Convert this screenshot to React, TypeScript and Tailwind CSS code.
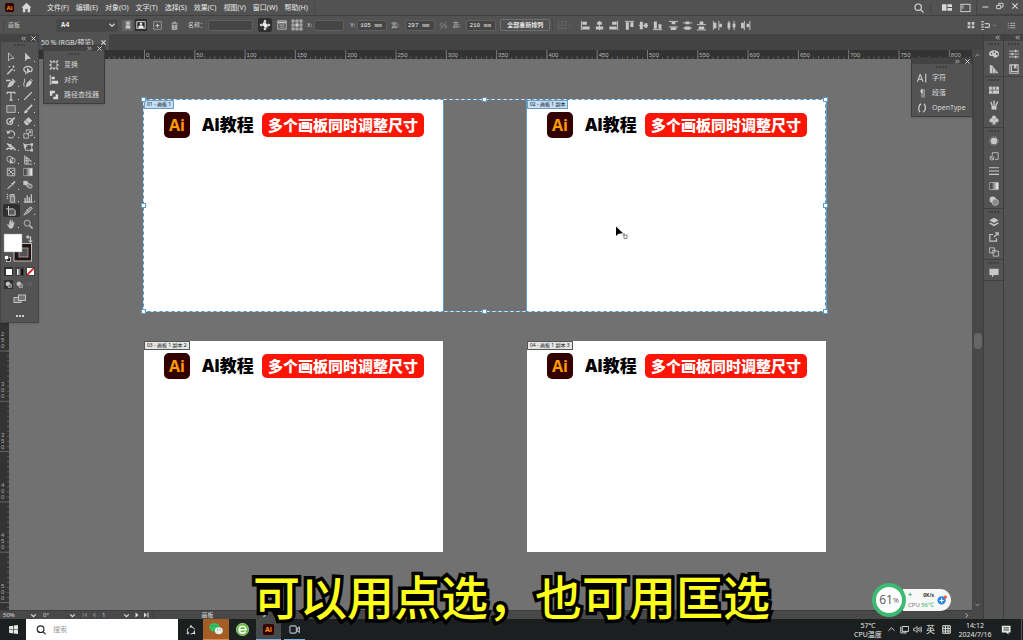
import React from "react";
import type { ReactNode } from "react";

const DIM = "text-[#c8c8c8]";

function Ico({ children, className = "size-3", w = 1 }: { children: ReactNode; className?: string; w?: number }) {
  return (
    <svg viewBox="0 0 12 12" fill="none" stroke="currentColor" strokeWidth={w} className={"shrink-0 " + className} aria-hidden="true">
      {children}
    </svg>
  );
}

const F = { fill: "currentColor", stroke: "none" } as const;

function Btn({ label, children, className = "" }: { label: string; children: ReactNode; className?: string }) {
  return (
    <button type="button" aria-label={label} className={"flex shrink-0 items-center justify-center " + className}>
      {children}
    </button>
  );
}

function Caret({ className = "size-2" }: { className?: string }) {
  return (
    <Ico className={className} w={2}>
      <path d="M2 4l4 4 4-4" />
    </Ico>
  );
}

function AiLogo({ className }: { className: string }) {
  return (
    <span className={"flex shrink-0 items-center justify-center bg-[#330000] font-['Open_Sans',sans-serif] font-bold leading-none text-[#ff9a00] " + className}>
      Ai
    </span>
  );
}

/* ---------- menu bar ---------- */

const MENUS = ["文件(F)", "编辑(E)", "对象(O)", "文字(T)", "选择(S)", "效果(C)", "视图(V)", "窗口(W)", "帮助(H)"];

function MenuBar() {
  return (
    <header className="flex h-4 shrink-0 items-center border-b border-[#404040] bg-[#525252]">
      <AiLogo className="ml-[5px] size-[9px] rounded-[2px] text-[6px]" />
      <Btn label="主页" className="ml-[6px] w-3 text-[#d6d6d6]">
        <Ico className="size-[11px]">
          <path {...F} d="M6 .8L.6 6H2v5.200h2.800V7.600h2.400v3.600H10V6h1.400z" />
        </Ico>
      </Btn>
      <nav className="ml-[15px] flex gap-[7px]">
        {MENUS.map((m) => (
          <button key={m} type="button" className="text-[7px] leading-[14px] whitespace-nowrap text-[#e8e8e8]">
            {m}
          </button>
        ))}
      </nav>
      <span className="ml-[6px] h-3 w-px bg-[#484848]" />
      <div className="ml-auto flex h-full items-center text-[#d8d8d8]">
        <Btn label="搜索" className="w-3">
          <Ico className="size-[10px]" w={1.4}>
            <circle cx="5" cy="5" r="3.8" />
            <path d="M8 8l3.400 3.400" />
          </Ico>
        </Btn>
        <span className="mr-[7px] ml-[5px] h-2.5 w-px bg-[#444]" />
        <Btn label="排列文档" className="ml-[2px] w-3">
          <Ico className="size-[11px]">
            <path {...F} d="M1 2.500h5v7H1zM7 2.500h5v3H7zM7 6.500h5v3H7z" />
          </Ico>
        </Btn>
        <Btn label="工作区" className="ml-[7px] w-3">
          <Ico className="size-[11px]">
            <rect x="1" y="2.500" width="10" height="8" />
            <path d="M2 4.500h2M2 6.500h2" />
          </Ico>
        </Btn>
        <div className="ml-[5px] flex h-full items-start border-b border-l border-[#444] pt-[2px]">
          <Btn label="最小化" className="w-[15px]">
            <Ico className="size-2">
              <path d="M2 7.500h9" strokeWidth={1.6} />
            </Ico>
          </Btn>
          <Btn label="还原" className="w-[15px]">
            <Ico className="size-2">
              <path d="M1 5h6v5H1zM4 5V2h6.500v5.500H7" strokeWidth={1.4} />
            </Ico>
          </Btn>
          <Btn label="关闭" className="w-4">
            <Ico className="size-2">
              <path d="M2 2l8 8M10 2l-8 8" strokeWidth={1.6} />
            </Ico>
          </Btn>
        </div>
      </div>
    </header>
  );
}

/* ---------- control bar ---------- */

function Field({ id, label, value, className }: { id: string; label: string; value: string; className: string }) {
  return (
    <div className="flex shrink-0 items-center">
      <label htmlFor={id} className="mr-[2px] text-[6px] leading-3 whitespace-nowrap text-[#cfcfcf]">
        {label}
      </label>
      <input
        id={id}
        defaultValue={value}
        className={"h-[11px] rounded-[2px] border border-[#606060] bg-[#454545] px-[2px] font-['Liberation_Mono',monospace] text-[6px] leading-none text-[#ececec] " + className}
      />
    </div>
  );
}

const ALIGN: { label: string; icon: ReactNode }[] = [
  { label: "左对齐", icon: <><path d="M1.500 1v10" /><path {...F} d="M2.500 2h5v3.300h-5zM2.500 7h8v3.300h-8z" /></> },
  { label: "水平居中", icon: <><path d="M6 1v10" /><path {...F} d="M3.500 2h5v3.300h-5zM2 7h8v3.300H2z" /></> },
  { label: "右对齐", icon: <><path d="M10.500 1v10" /><path {...F} d="M4.500 2h5v3.300h-5zM1.500 7h8v3.300h-8z" /></> },
  { label: "顶对齐", icon: <><path d="M1 1.500h10" /><path {...F} d="M2 2.500h3.300v8H2zM7 2.500h3.300v5H7z" /></> },
  { label: "垂直居中", icon: <><path d="M1 6h10" /><path {...F} d="M2 2h3.300v8H2zM7 3.500h3.300v5H7z" /></> },
  { label: "底对齐", icon: <><path d="M1 10.500h10" /><path {...F} d="M2 1.500h3.300v8H2zM7 4.500h3.300v5H7z" /></> },
  { label: "顶分布", icon: <><path d="M1 1.500h10M1 7.500h10" /><path {...F} d="M4 2h4v2.600H4zM3 8h6v3H3z" /></> },
  { label: "垂直分布", icon: <><path d="M1 3.200h10M1 8.800h10" /><path {...F} d="M4 1.500h4v3.200H4zM3 7.200h6v3.300H3z" /></> },
  { label: "底分布", icon: <><path d="M1 5h10M1 10.800h10" /><path {...F} d="M4 1.500h4v3H4zM3 7.200h6v3H3z" /></> },
  { label: "左分布", icon: <><path d="M1.500 1v10M7.500 1v10" /><path {...F} d="M2 3h2.800v6H2zM8 4h2.800v4H8z" /></> },
  { label: "水平分布", icon: <><path d="M3.200 1v10M8.800 1v10" /><path {...F} d="M1.700 3h3v6h-3zM7.300 4h3v4h-3z" /></> },
  { label: "右分布", icon: <><path d="M4.800 1v10M10.800 1v10" /><path {...F} d="M1.200 3h3v6h-3zM7.200 4h3v4h-3z" /></> },
];

function AlignGroup({ from, to }: { from: number; to: number }) {
  return (
    <div className="flex gap-[3px]">
      {ALIGN.slice(from, to).map((a) => (
        <Btn key={a.label} label={a.label} className="w-[11px]">
          <Ico className="size-[11px]">{a.icon}</Ico>
        </Btn>
      ))}
    </div>
  );
}

function ControlBar() {
  return (
    <div className={"flex h-[18px] shrink-0 items-center bg-[#525252] " + DIM}>
      <span className="ml-[3px] h-3 w-px bg-[#474747]" />
      <span className="ml-1 w-12 text-[6px] leading-3">画板</span>
      <label className="flex h-[13px] w-[62px] items-center rounded-[2px] border border-[#4a4a4a] bg-[#474747] pr-px">
        <select aria-label="预设" className="min-w-0 flex-1 appearance-none bg-transparent pl-[4px] font-['Liberation_Mono',monospace] text-[7px] leading-none font-bold text-[#eee]">
          <option>A4</option>
        </select>
        <Caret />
      </label>
      <div className="ml-[4px] flex items-center gap-[2px]">
        <Btn label="纵向" className="h-[11px] w-[11px] bg-[#626262]">
          <Ico className="size-[10px]">
            <path {...F} d="M3 1h6v10H3z" opacity=".45" />
            <circle {...F} cx="6" cy="4" r="1.600" />
            <path {...F} d="M3.500 10V7.500Q6 5 8.500 7.500V10z" />
          </Ico>
        </Btn>
        <Btn label="横向" className="h-3 w-3 bg-[#2e2e2e] text-[#eee]">
          <Ico className="size-[10px]">
            <rect x="1" y="2" width="10" height="8" />
            <path {...F} d="M3 9.500V7.500Q6 5 9 7.500v2z" />
            <circle {...F} cx="6" cy="4.500" r="1.500" />
          </Ico>
        </Btn>
      </div>
      <Btn label="新建画板" className="ml-[5px] w-[11px]">
        <Ico className="size-[9px]">
          <rect x="1" y="1" width="10" height="10" opacity=".7" />
          <path d="M6 3.500v5M3.500 6h5" strokeWidth={1.4} />
        </Ico>
      </Btn>
      <Btn label="删除画板" className="ml-[6px] w-[11px]">
        <Ico className="size-[9px]">
          <path d="M2 3h8M4.500 3V1.500h3V3" />
          <path d="M3 4.500v6.500h6V4.500M5 5v5M7 5v5" strokeWidth={1.3} />
        </Ico>
      </Btn>
      <div className="ml-[8px]"><Field id="ab-name" label="名称：" value="" className="w-[45px]" /></div>
      <Btn label="移动图稿" className="ml-[5px] h-[14px] w-[14px] rounded-[2px] bg-[#2e2e2e] text-[#eee]">
        <Ico className="size-3">
          <path d="M6 1.500v9M1.500 6h9" />
          <path {...F} d="M6 .5l1.700 2.200H4.300zM6 11.500l1.700-2.200H4.300zM.5 6l2.200-1.700v3.400zM11.500 6L9.300 4.300v3.400zM4 3.500h2.500L8.500 6v2.500H6L3.500 6z" />
        </Ico>
      </Btn>
      <Btn label="画板选项" className="ml-[4px] w-[11px]">
        <Ico className="size-[10px]">
          <rect x="1" y="1" width="10" height="10" />
          <path d="M1 3h10" strokeWidth={2} />
          <path d="M3 6h6M3 8.500h6" />
        </Ico>
      </Btn>
      <Btn label="参考点" className="ml-[3px] w-[13px]">
        <Ico className="size-3">
          <path d="M2 2h8v8H2z" opacity=".5" strokeWidth={0.6} />
          {[2, 6, 10].flatMap((x) => [2, 6, 10].map((y) => <rect key={x + "-" + y} x={x - 1} y={y - 1} width="2" height="2" strokeWidth={0.8} />))}
          <path {...F} d="M4.500 4.500h3v3h-3z" />
        </Ico>
      </Btn>
      <div className="ml-[4px] flex items-center">
        <Field id="pos-x" label="X:" value="" className="w-[30px]" />
      </div>
      <div className="ml-[6px]"><Field id="pos-y" label="Y:" value="105 mm" className="w-[30px]" /></div>
      <div className="ml-[4px]"><Field id="size-w" label="宽:" value="297 mm" className="ml-[4px] w-[30px]" /></div>
      <Btn label="约束比例" className="ml-[4px] w-[10px] text-[#777]">
        <Ico className="size-[9px]" w={1.4}>
          <path d="M5 4L3.500 2.500 1.500 4.500 4.500 7.500M7 8l1.500 1.500 2-2-3-3M2 11L10 1" />
        </Ico>
      </Btn>
      <div className="ml-[4px]"><Field id="size-h" label="高:" value="210 mm" className="ml-[4px] w-[30px]" /></div>
      <button type="button" className="ml-[4px] h-3 w-[50px] shrink-0 rounded-[2px] border border-[#707070] text-[6px] leading-[10px] font-bold whitespace-nowrap text-[#e6e6e6]">
        全部重新排列
      </button>
      <span className="ml-[2px] h-3 w-px bg-[#474747]" />
      <Btn label="对齐方式" className="ml-[5px] w-[15px] text-[#707070]">
        <Ico className="size-[10px]">
          <path d="M1 1v10M5 1v10M9 1v10M0 2h11M0 6h11M0 10h11" strokeDasharray="1.500 1" />
        </Ico>
        <Caret className="size-[5px]" />
      </Btn>
      <div className="ml-[7px] flex items-center gap-[5px]">
        <AlignGroup from={0} to={3} />
        <AlignGroup from={3} to={6} />
        <AlignGroup from={6} to={9} />
        <AlignGroup from={9} to={12} />
      </div>
      <div className="mr-[7px] ml-auto flex items-center">
        <Btn label="网格" className="w-[10px]">
          <Ico className="size-2">
            <path {...F} d="M1 1.500h4v4H1zM7 1.500h4v4H7zM1 7h4v4H1zM7 7h4v4H7z" />
          </Ico>
        </Btn>
        <Btn label="对齐选项" className="ml-[4px] w-[10px]">
          <Ico className="size-[9px]">
            <path d="M2 0v12" strokeDasharray="2 1.500" strokeWidth={3} />
            <path d="M5 3.500h4a2.500 2.500 0 010 5H5" strokeWidth={1.6} />
          </Ico>
        </Btn>
        <Caret className="ml-[2px] size-[5px] text-[#888]" />
        <Btn label="控制栏菜单" className="ml-[9px] w-[10px]">
          <Ico className="size-[9px]">
            <path d="M1 3h1.500M4 3h7M1 6h1.500M4 6h7M1 9h1.500M4 9h7" />
          </Ico>
        </Btn>
      </div>
    </div>
  );
}

/* ---------- tools panel ---------- */

type Tool = [string, ReactNode, boolean?, boolean?];

const TOOLS: Tool[] = [
  ["选择工具", <path d="M3 1v9.500l2.700-2.500L9.500 7.600z" />],
  ["直接选择工具", <path {...F} d="M2.500 .5v10.500l2.800-2.700 4.200-.3z" />, true],
  ["魔棒工具", <><path d="M1.500 11L8 4.500" strokeWidth={1.8} /><path d="M9 .5v3M7.500 2h3M4 1v2M3 2h2M10 5.500v2M9 6.500h2" /></>],
  ["套索工具", <><path d="M3.500 8.500C-1 6 1 1.500 6 1.500S12.500 6 9 8.500M3.500 8v3" strokeWidth={1.5} /><path {...F} d="M4.800 3v7.500l2-1.700 3-.3z" /></>],
  ["钢笔工具", <><path {...F} d="M1.500 11L4 5.500 7.500 3l2.500 2.500-2 3.500-4 2z" /><path d="M7.500 1.500l3.500 3.500M0 3h5.500" strokeWidth={1.8} /></>, true],
  ["曲率工具", <><path {...F} d="M3 11.500L4.500 6l4-3.500L11 5 8.500 9z" /><path d="M1.500 10C-.5 7 3 4 2 1M9 1l2.500 2.500" strokeWidth={1.2} /></>],
  ["文字工具", <path d="M1.500 3.500v-2h9v2M6 1.500v9.500M4 11h4" strokeWidth={1.5} />, true],
  ["直线段工具", <path d="M1.500 10.500l9-9" strokeWidth={1.3} />, true],
  ["矩形工具", <rect x="1" y="2" width="10" height="8" fill="#6a6a6a" />, true],
  ["画笔工具", <><path d="M5 7l6-6" strokeWidth={2} /><path {...F} d="M1 11c1-1 .5-3 2.500-4L6 8.500C5.500 11 3 11.500 1 11z" /></>, true],
  ["铅笔工具", <><circle cx="4.500" cy="6.500" r="3.500" strokeWidth={1.4} /><path d="M4 8l6.500-6" strokeWidth={2} /></>, true],
  ["橡皮擦工具", <><path {...F} d="M.8 7L6.500 1.500l4.500 4L5.500 11 3 10.500z" /><path d="M3 5l4.500 4" stroke="#535353" strokeWidth={0.8} /></>, true],
  ["旋转工具", <><path d="M2.500 4A4.300 4.300 0 113 9.500" strokeWidth={1.3} strokeDasharray="12 1.500" /><path {...F} d="M.5 1.500L1.500 6l4-1.500z" /></>, true],
  ["比例缩放工具", <><path d="M1 5.500h5.500V11H1zM4 4V1h7v7H8M5 7l4-4M7 3h2v2" /></>, true],
  ["宽度工具", <><path d="M1 2.500c3-1 3 3 5 3s3 1 5.500 4.500M.5 9.500c2-4 4 0 8-3" strokeWidth={1.8} /><circle {...F} cx="4.800" cy="4" r="2" /><circle {...F} cx="6.500" cy="8.500" r="1.300" /></>, true],
  ["自由变换工具", <><path d="M3 3h7.500v7H3z" /><path {...F} d="M0 1l6 4-3 1-1 3zM9 1.500h3v3H9zM9 8.500h3v3H9z" /></>],
  ["形状生成器", <><circle cx="4.500" cy="5" r="3.500" /><circle cx="8" cy="6.500" r="3" /><path {...F} d="M5 5v6l1.700-1.500H9z" /></>, true],
  ["透视网格工具", <path d="M2 1v10M2 1l4 3v7M6 4l4.500 4M2 11h9M2 7h8M2 4h4M4 2.500V11" />, true],
  ["网格工具", <><path d="M1.500 1.500h9v9h-9z" /><path d="M1.500 4.500Q4 2.500 6 6t4.500 1.500M4.500 1.500Q2.500 4 6 6t1.500 4.500M1.500 8.500Q4 9 6 6t4.500-2" /></>],
  ["渐变工具", <><rect x="1" y="1.500" width="10" height="9" fill="url(#toolGradient)" stroke="#bbb" strokeWidth={0.8} /></>],
  ["吸管工具", <><path d="M1.500 10.500l5-5M3 10.500L7.500 6" /><path {...F} d="M6 4l2-.5 2-2.500 1.500 1.500L9 5l-.5 2z" /></>, true],
  ["混合工具", <><rect x="1" y="1.500" width="4" height="4" fill="currentColor" /><circle cx="6" cy="6" r="2.200" /><circle cx="8.500" cy="7.500" r="2.500" fill="#777" /></>],
  ["符号喷枪", <><rect x="5" y="4.500" width="5.500" height="6.500" fill="#777" /><path d="M6 4V2h3.500v2M1 1.500h1.500M1 4h1.500M1 6.500h1.500M3.500 3h1" strokeWidth={1.4} /></>, true],
  ["柱形图工具", <path d="M1 11h10.500M2.500 11V6M5 11V3M7.500 11V5M10 11V1.500" strokeWidth={1.5} />, true],
  ["画板工具", <><path d="M3 0v3.500M0 3.500h3" strokeWidth={1.2} /><path d="M3 3.500h6l2 2v5.500H3z" fill="#5a5a5a" strokeWidth={1.2} /></>, false, true],
  ["切片工具", <path d="M1 11l4-6.500L9.500 1l1.500 2-4 4.500zM5 4.500L7 7" fill="#888" />, true],
  ["抓手工具", <><path {...F} d="M2.500 6L4 8V3c0-1 1-1 1 0v2l.3-4c0-1 1-1 1 0l.2 4L7.300 2c.2-1 1.200-.8 1 .2L8 6l1.200-2c.5-.8 1.300-.3 1 .5L8.500 10 7 11.500H4.500L1.300 7z" /></>, true],
  ["缩放工具", <><circle cx="5" cy="5" r="3.600" /><path d="M7.800 7.800L11.500 11.500" strokeWidth={1.6} /></>],
];

function Grip() {
  return (
    <svg viewBox="0 0 12 2" className="h-[2px] w-3 text-[#3f3f3f]" aria-hidden="true">
      <path d="M0 1h12" stroke="currentColor" strokeWidth={2} strokeDasharray="2 1" />
    </svg>
  );
}

function PanelHead({ dir, className = "h-2" }: { dir: "left" | "right"; className?: string }) {
  return (
    <div className={"flex shrink-0 items-center justify-end gap-[5px] bg-[#434343] pr-[2px] text-[#d0d0d0] " + className}>
      <Btn label="折叠面板">
        <Ico className="size-[5px]" w={2}>
          {dir === "left" ? <path d="M6 2L2 6l4 4M11 2L7 6l4 4" /> : <path d="M1 2l4 4-4 4M6 2l4 4-4 4" />}
        </Ico>
      </Btn>
      <Btn label="关闭面板">
        <Ico className="size-[5px]" w={2.4}>
          <path d="M1 1l10 10M11 1L1 11" />
        </Ico>
      </Btn>
    </div>
  );
}

function ToolsPanel() {
  return (
    <aside className={"absolute top-0 left-0 flex h-[289px] w-[39px] flex-col border border-[#444] bg-[#535353] pb-1 shadow " + DIM}>
      <PanelHead dir="left" className="h-[7px]" />
      <div className="flex h-[9px] shrink-0 items-start justify-center pt-[2px]">
        <Grip />
      </div>
      <div className="grid h-[179px] shrink-0 grid-cols-2 grid-rows-14 px-[2px]">
        {TOOLS.map(([label, icon, more, active]) => (
          <button
            key={label}
            type="button"
            aria-label={label}
            className={"relative flex min-h-0 items-center justify-center " + (active ? "rounded-[2px] bg-[#2f2f2f]" : "")}
          >
            <Ico className="size-[10px]">{icon}</Ico>
            {more && <span className="absolute right-px bottom-[2px] size-px bg-[#d0d0d0]" />}
          </button>
        ))}
      </div>
      <div className="mt-[3px] flex h-[32px] shrink-0 justify-center">
        <svg viewBox="0 0 36 32" className="h-8 w-9" role="img" aria-label="填色和描边">
          <rect x="12" y="10.500" width="17.500" height="17.500" fill="#241313" stroke="#bdbdbd" />
          <rect x="17" y="15" width="9" height="9" fill="#535353" stroke="#b0b0b0" strokeWidth=".8" />
          <rect x="2" y="1" width="18" height="18" fill="#fff" stroke="#9a9a9a" strokeWidth=".5" />
          <path d="M25 4h3.500v5" fill="none" stroke="#ccc" strokeWidth="1.200" />
          <path d="M26.500 1.800v4.400L23.800 4zM26.300 7.500h4.400L28.500 10z" fill="#ccc" />
          <rect x="4.500" y="24.500" width="4" height="4" fill="#111" stroke="#ddd" strokeWidth=".8" />
          <rect x="2.500" y="22.500" width="4" height="4" fill="#fff" stroke="#333" strokeWidth=".6" />
        </svg>
      </div>
      <div className="flex justify-center gap-[2px] pt-[2px]">
        <Btn label="颜色" className="size-[9px] bg-[#303030]"><span className="size-[6px] bg-white" /></Btn>
        <Btn label="渐变" className="size-[9px] bg-[#424242]"><span className="size-[6px] bg-linear-to-r from-white to-black" /></Btn>
        <Btn label="无" className="size-[9px] bg-[#424242]">
          <Ico className="size-[7px] bg-white"><path d="M0 12L12 0" stroke="#e31b1b" strokeWidth={3} /></Ico>
        </Btn>
      </div>
      <div className="flex justify-center gap-[2px] pt-[4px]">
        {["正常绘图", "背面绘图", "内部绘图"].map((l, i) => (
          <Btn key={l} label={l} className={"size-[9px] " + (i === 0 ? "bg-[#303030]" : i === 2 ? "text-[#6d6d6d]" : "")}>
            <Ico className="size-[7px]">
              <circle cx="5" cy="5" r="3.500" fill={i === 2 ? "none" : "currentColor"} />
              {i < 2 ? <rect x="5.500" y="5.500" width="5.500" height="5.500" fill="#777" /> : <circle cx="5" cy="5" r="1" />}
            </Ico>
          </Btn>
        ))}
      </div>
      <Btn label="更改屏幕模式" className="mt-[4px] h-3">
        <svg viewBox="0 0 14 10" className="h-[10px] w-[14px]" fill="#747474" stroke="#c2c2c2" aria-hidden="true">
          <rect x="1" y="3.500" width="7" height="5" />
          <rect x="5.500" y="1" width="7" height="5.500" />
        </svg>
      </Btn>
      <Btn label="编辑工具栏" className="mt-[5px] h-3">
        <svg viewBox="0 0 8 2" className="h-[2px] w-2" fill="#ccc" aria-hidden="true">
          <path d="M0 0h2v2H0zM3 0h2v2H3zM6 0h2v2H6z" />
        </svg>
      </Btn>
    </aside>
  );
}

/* ---------- floating panels ---------- */

function FloatPanel({ items, className, head }: { items: [string, ReactNode][]; className: string; head: string }) {
  return (
    <section className={"absolute flex w-[62px] flex-col border border-[#3d3d3d] bg-[#535353] pb-px shadow " + className}>
      <PanelHead dir="right" className={head} />
      <div className="flex h-[6px] justify-center pt-[2px]">
        <Grip />
      </div>
      {items.map(([label, icon]) => (
        <button key={label} type="button" className="flex h-[15px] items-center gap-[5px] pl-[5px] text-[#d8d8d8]">
          <Ico className="size-[10px]">{icon}</Ico>
          <span className="text-[7px] leading-none whitespace-nowrap">{label}</span>
        </button>
      ))}
    </section>
  );
}

const LEFT_ITEMS: [string, ReactNode][] = [
  ["变换", <><rect x="2.500" y="2.500" width="7" height="7" strokeWidth={0.8} /><path d="M1 1.500h10M1 10.500h10M1.500 5v2M10.500 5v2" strokeWidth={2} strokeDasharray="2 2" /></>],
  ["对齐", <><path d="M1.500 0v12" /><path {...F} d="M3 2h4v3H3zM3 7h8v3.500H3z" /></>],
  ["路径查找器", <><path {...F} d="M1 1h6v3H4v3H1z" /><path {...F} d="M5 5h6v6H5V8h3V5z" /></>],
];

const RIGHT_ITEMS: [string, ReactNode][] = [
  ["字符", <path d="M.5 10.500L3.800 1.500l3.400 9M1.500 7.500h4.600M10.500 1v10.500" strokeWidth={1.2} />],
  ["段落", <><path d="M6 1.500v10M8.500 1.500v10" /><path {...F} d="M6.500 1v5.500a2.800 2.800 0 010-5.500z" /></>],
  ["OpenType", <path d="M5 1C2 2 1 8 3.500 11M7 11C10.500 10 11 4 8.500 1" strokeWidth={1.4} />],
];

/* ---------- canvas ---------- */

const H_MARKS = Array.from({ length: 17 }, (_, i) => i * 50);
const V_MARKS = Array.from({ length: 6 }, (_, i) => 250 + i * 50);
const MM = 1.006;

function HRuler() {
  return (
    <svg className="block h-[9px] w-full bg-[#333]" aria-label="水平标尺" role="img">
      {Array.from({ length: 173 }, (_, i) => {
        const x = 144.5 + (i * 5 - 40) * MM;
        return <path key={i} d={"M" + x + (i % 2 ? " 7v2" : " 6v3")} stroke="#686868" strokeWidth=".8" />;
      })}
      {H_MARKS.map((m) => (
        <g key={m}>
          <path d={"M" + (144.5 + m * MM) + " 0v9"} stroke="#777" />
          <text x={146 + m * MM} y="7" fontSize="6" fill="#b4b4b4" className="font-['Liberation_Sans',sans-serif]">
            {m}
          </text>
        </g>
      ))}
    </svg>
  );
}

function VRuler() {
  return (
    <svg className="block w-[9px] shrink-0 self-stretch bg-[#333]" aria-label="垂直标尺" role="img">
      {Array.from({ length: 60 }, (_, i) => (
        <path key={i} d={"M7 " + (40.5 + (250 + i * 5) * MM) + "h2"} stroke="#686868" strokeWidth=".8" />
      ))}
      {V_MARKS.map((m) => {
        const y = 40.5 + m * MM;
        return (
          <g key={m}>
            <path d={"M0 " + y + "h9"} stroke="#666" />
            {String(m).split("").map((d, i) => (
              <text key={i} x="1" y={y - 15 + i * 6} fontSize="6" fill="#a8a8a8" className="font-['Liberation_Sans',sans-serif]">
                {d}
              </text>
            ))}
          </g>
        );
      })}
    </svg>
  );
}

const BOARDS = [
  { tag: "01 - 画板 1", place: "left-[135px] top-[41px]", on: true },
  { tag: "02 - 画板 1 副本", place: "left-[518px] top-[41px]", on: true },
  { tag: "03 - 画板 1 副本 2", place: "left-[135px] top-[282px]", on: false },
  { tag: "04 - 画板 1 副本 3", place: "left-[518px] top-[282px]", on: false },
];

function Artboard({ tag, place, on }: { tag: string; place: string; on: boolean }) {
  return (
    <article className={"absolute h-[211px] w-[299px] bg-white " + place + (on ? " outline outline-[#5f9cc8]" : "")}>
      <span
        className={
          "absolute top-0 left-0 border px-[2px] text-[5px] leading-[7px] whitespace-nowrap text-[#111] " +
          (on ? "border-[#6a9cc4] bg-[#c4dff5]" : "border-[#555] bg-[#e6e6e6]")
        }
      >
        {tag}
      </span>
      <div className="flex items-center pt-3 pl-5">
        <AiLogo className="size-[26px] rounded-[5px] text-[16px]" />
        <h2 className="ml-3 w-[51px] text-center text-[17px] leading-[26px] font-black whitespace-nowrap text-black">Ai教程</h2>
        <p className="ml-[9px] w-[162px] rounded-[5px] bg-[#fc1505] text-center text-[15px] leading-6 font-black whitespace-nowrap text-white">
          多个画板同时调整尺寸
        </p>
      </div>
    </article>
  );
}

function Selection() {
  return (
    <svg viewBox="0 0 690 220" className="absolute top-[36px] left-[130px] h-[220px] w-[690px]" aria-hidden="true">
      <rect x="4.500" y="4.500" width="682" height="212" fill="none" stroke="#4e8fc4" />
      <rect x="4.500" y="4.500" width="682" height="212" fill="none" stroke="#dcebf5" strokeDasharray="3 3" />
      {[[4.5, 4.5], [345.5, 4.5], [686.5, 4.5], [4.5, 110.5], [686.5, 110.5], [4.5, 216.5], [345.5, 216.5], [686.5, 216.5]].map(([x, y]) => (
        <rect key={x + "," + y} x={x - 2} y={y - 2} width="4" height="4" fill="#fff" stroke="#5f9cc8" />
      ))}
    </svg>
  );
}

function Canvas() {
  return (
    <div className="relative min-w-0 flex-1 overflow-hidden bg-[#717171]">
      {BOARDS.map((b) => (
        <Artboard key={b.tag} {...b} />
      ))}
      <Selection />
      <svg viewBox="0 0 14 14" className="absolute top-[167px] left-[606px] size-[14px]" aria-hidden="true">
        <path d="M1 .5v9.500l2.500-2.300L8 7.200z" fill="#000" />
        <path d="M9 7v2M7.500 9H12v3.500H9V9" fill="#fff" stroke="#777" strokeWidth=".9" />
      </svg>
    </div>
  );
}

function StatusBar() {
  return (
    <div className="flex h-[9px] shrink-0 items-center border-t border-[#3c3c3c] bg-[#484848] text-[6px] leading-none text-[#ddd]">
      <select aria-label="缩放" className="w-[30px] appearance-none pl-[3px] text-[6px] leading-none"><option>50%</option></select>
      <Caret className="size-[7px]" />
      <select aria-label="旋转" className="ml-[6px] w-[26px] appearance-none text-[6px] leading-none"><option>0°</option></select>
      <Caret className="size-[7px]" />
      <Btn label="首项" className="ml-[5px] w-2 text-[#777]"><Ico className="size-[6px]"><path {...F} d="M1 1h2v10H1zM10 1v10L4 6z" /></Ico></Btn>
      <Btn label="上一项" className="ml-px w-2 text-[#777]"><Ico className="size-[6px]"><path {...F} d="M9 1v10L3 6z" /></Ico></Btn>
      <select aria-label="画板导航" className="ml-[4px] w-[21px] appearance-none text-[6px] leading-none"><option>1</option></select>
      <Caret className="size-[7px]" />
      <Btn label="下一项" className="ml-[3px] w-2"><Ico className="size-[6px]"><path {...F} d="M3 1v10l6-5z" /></Ico></Btn>
      <Btn label="末项" className="ml-px w-2"><Ico className="size-[6px]"><path {...F} d="M9 1h2v10H9zM2 1v10l6-5z" /></Ico></Btn>
      <span className="ml-[3px] h-full w-px bg-[#3c3c3c]" />
      <span className="w-[107px] text-center">画板</span>
      <Btn label="状态菜单" className="w-2"><Ico className="size-[6px]"><path {...F} d="M3 1v10l6-5z" /></Ico></Btn>
      <Ico className="mr-[3px] ml-auto size-[5px]" w={2}><path d="M4 1l5 5-5 5" /></Ico>
    </div>
  );
}

/* ---------- dock ---------- */

const DOCK: [string, ReactNode][][] = [
  [
    ["颜色", <><path {...F} d="M0 6c0-3 3-4.500 6-4.500S12 3 12 6s-3 4.500-5 4.500-1-2-3-2S0 8.500 0 6z" /><circle cx="3" cy="5.500" r="1" fill="#535353" stroke="none" /><circle cx="6.500" cy="3.800" r="1" fill="#535353" stroke="none" /><circle cx="9.500" cy="6" r="1.300" fill="#535353" stroke="none" /></>],
    ["颜色参考", <><path {...F} d="M1 1l3 1 7.500 9H1z" /><path d="M4.500 4v7M8 7.500V11" stroke="#666" strokeWidth={0.8} /></>],
  ],
  [
    ["色板", <><path {...F} d="M0 2h12v8.500H0z" /><path d="M0 6.200h12M4 2v8M8 2v4" stroke="#535353" strokeWidth={0.8} /></>],
    ["画笔", <><path d="M4 7L2 2M6 7V.5M8 7l2.500-5" strokeWidth={1.6} /><path {...F} d="M3 7h6v4.500H3z" /></>],
    ["符号", <><circle {...F} cx="6" cy="3" r="2.500" /><circle {...F} cx="3" cy="6.500" r="2.500" /><circle {...F} cx="9" cy="6.500" r="2.500" /><path {...F} d="M5.300 5h1.400l1.300 6.500H4z" /></>],
  ],
  [
    ["外观", <><circle {...F} cx="6" cy="6" r="3.900" /><circle cx="6" cy="6" r="5" strokeWidth={1} strokeDasharray="1 1" /></>],
    ["图形样式", <><path d="M4 5V2h7v8H7" /><circle cx="3.500" cy="8.500" r="2.300" /><path d="M1.500 6.500l4 4" /></>],
    ["描边", <path d="M0 2h12M0 6h12M0 10h12" strokeWidth={1.3} />],
    ["渐变", <rect x="1" y="2" width="10" height="8" fill="url(#toolGradient)" strokeWidth={0.8} />],
    ["透明度", <><circle {...F} cx="4.500" cy="4.500" r="3.800" /><circle cx="7.500" cy="7.500" r="3.800" fill="#8a8a8a" stroke="#ccc" strokeWidth={0.8} /></>],
  ],
  [
    ["图层", <><path {...F} d="M6 1l5.500 3L6 7.200.5 4z" /><path d="M.8 7L6 10l5.200-3" strokeWidth={1.8} /></>],
    ["资源导出", <path d="M5 3H1v8h8V7.500M6 6l5-5M7.500 1H11v3.500" strokeWidth={1.4} />],
    ["画板", <path d="M.5 1h6v6h-6zM8 4h-4v3M5 7v4h6.500V5H7" />],
  ],
  [["注释", <path {...F} d="M.5 1h11v7.500H6L3.500 11.500v-3h-3z" />]],
];

const DOCK2: [string, ReactNode][][] = [
  [
    ["属性", <><path d="M0 2.500h12M0 6h12M0 9.500h12" /><path {...F} d="M7 1h2v3H7zM3 4.500h2v3H3zM7 8h2v3H7z" /></>],
    ["库", <><path d="M1 1h10v10H1zM3 1v8h8" strokeWidth={1.3} /><path {...F} d="M6 1h3v5L7.500 4.800 6 6z" /></>],
  ],
];

function Dock({ groups }: { groups: [string, ReactNode][][] }) {
  return (
    <aside className={"flex w-5 shrink-0 flex-col border-l border-[#3d3d3d] bg-[#535353] " + DIM}>
      <div className="flex h-[7px] shrink-0 items-center justify-end bg-[#434343] pr-[3px]">
        <Ico className="size-[5px]" w={2.2}><path d="M6 2L2 6l4 4M11 2L7 6l4 4" /></Ico>
      </div>
      {groups.map((g, i) => (
        <div key={i} className="flex shrink-0 flex-col items-center border-b border-[#3f3f3f]">
          <div className="flex h-[5px] items-center"><Grip /></div>
          {g.map(([label, icon]) => (
            <Btn key={label} label={label} className="h-[15px] w-full">
              <Ico className="size-[10px]">{icon}</Ico>
            </Btn>
          ))}
        </div>
      ))}
    </aside>
  );
}

/* ---------- taskbar ---------- */

function Taskbar() {
  return (
    <footer className="flex h-[21px] shrink-0 items-stretch bg-[#1c1f1f] text-[#e6e6e6]">
      <Btn label="开始" className="w-[26px]">
        <Ico className="size-[9px]"><path {...F} d="M0 1.600L5.500.9v4.800H0zM6.300.8L12 0v5.700H6.300zM0 6.400h5.500v4.800L0 10.400zM6.300 6.400H12V12l-5.700-.8z" /></Ico>
      </Btn>
      <label className="flex w-[152px] shrink-0 items-center gap-[7px] bg-white pl-[10px] text-[#222]">
        <Ico className="size-[10px]" w={1.4}><circle cx="5.500" cy="5" r="4" /><path d="M8.500 8l3 3.200" /></Ico>
        <input aria-label="搜索" placeholder="搜索" className="w-24 bg-transparent text-[7px] leading-none placeholder:text-[#999]" />
      </label>
      <Btn label="任务" className="w-[25px]">
        <Ico className="size-[10px]" w={1.2}>
          <circle cx="6" cy="6.500" r="4.300" strokeDasharray="7 2" />
          <circle {...F} cx="6" cy="1.500" r="1.200" /><circle {...F} cx="2" cy="10" r="1.200" /><circle {...F} cx="10" cy="10" r="1.200" />
        </Ico>
      </Btn>
      <Btn label="微信" className="w-[26px] border-b border-[#e08a4a] bg-[#a55d28]">
        <Ico className="size-[14px]">
          <ellipse cx="4.600" cy="4.500" rx="4.300" ry="3.600" fill="#2fc466" stroke="none" />
          <ellipse cx="8.400" cy="7.500" rx="3.400" ry="2.900" fill="#e8efe8" stroke="none" />
          <path d="M3 3.500h.8M5.600 3.500h.8M7 6.800h.6M9.300 6.800h.6" stroke="#1c5a32" strokeWidth={0.8} />
        </Ico>
      </Btn>
      <Btn label="浏览器" className="w-[27px]">
        <Ico className="size-[13px]">
          <circle cx="6" cy="6" r="5.700" fill="#62bd3f" stroke="#bfe8ad" strokeWidth={0.6} />
          <path d="M2.800 6.200h6.400C9.200 1.800 2.900 2 2.900 6.200c0 3.800 4.500 4 6 1.600" stroke="#fff" strokeWidth={1.5} />
        </Ico>
      </Btn>
      <Btn label="Illustrator" className="w-[25px] border-b border-[#78b4e0] bg-[#474a4a]">
        <AiLogo className="size-[11px] rounded-[2px] text-[7px]" />
      </Btn>
      <Btn label="录屏" className="ml-[3px] w-[21px] border-b border-[#78b4e0]">
        <Ico className="size-[11px]" w={1.2}><rect x="1" y="2" width="7" height="8" rx="1.500" stroke="#b4bccd" /><path d="M9 5l2.300-1.500v5.500L9 7.500z" stroke="#b4bccd" /></Ico>
      </Btn>
      <div className="mr-px ml-auto flex items-center border-r border-[#555] pr-[10px]">
        <div className="w-[30px] text-center text-[7px] leading-[9px] whitespace-nowrap">57℃<br />CPU温度</div>
        <Btn label="显示隐藏的图标" className="ml-[4px] w-[10px]"><Ico className="size-[7px]" w={1.6}><path d="M1 8l5-5 5 5" /></Ico></Btn>
        <Btn label="网络" className="ml-[3px] w-[10px]"><Ico className="size-[9px]"><path d="M3 2h8.500v6.500H3zM1 4v6.500h6M1 2v2M6 10.500h3" strokeWidth={1.2} /></Ico></Btn>
        <Btn label="音量" className="ml-[3px] w-[10px]"><Ico className="size-[9px]"><path d="M.8 4.500v3h2L5.500 10V2L2.800 4.500zM7 4q1.500 2 0 4M8.800 3q2 3 0 6M10.500 2q2.500 4 0 8" /></Ico></Btn>
        <span className="ml-[3px] text-[9px] leading-none">英</span>
        <Btn label="输入法" className="ml-[6px] w-[10px]"><Ico className="size-[9px]"><path d="M1 1h10v10H1zM1 4.500h10M1 8h10M4.500 1v10M8 1v10" strokeWidth={1.3} /></Ico></Btn>
        <div className="ml-[6px] w-[36px] text-center text-[7px] leading-[9px] whitespace-nowrap">14:12<br />2024/7/16</div>
        <Btn label="通知" className="ml-[8px] w-[10px]"><Ico className="size-[10px]"><path {...F} d="M1 1h10.500v8H9v2.500L6 9H1z" /><path d="M3 3.500h6.500M3 6h6.500" stroke="#1c1f1f" /></Ico></Btn>
      </div>
    </footer>
  );
}

function Monitor() {
  return (
    <section className="absolute right-[72px] bottom-[23px] flex items-center" aria-label="系统监控">
      <div className="relative flex size-[34px] items-center justify-center rounded-full border-[4px] border-[#3dba71] bg-white font-['Open_Sans',sans-serif] text-[#555]">
        <span className="text-[12px] leading-none">61</span>
        <span className="text-[7px] leading-none">%</span>
      </div>
      <div className="-ml-[3px] flex h-[22px] w-12 items-center rounded-r-full bg-[#f8f8f8] pr-[4px] pl-[5px] text-[6px] leading-[10px] whitespace-nowrap text-[#333]">
        <div className="w-[26px]">
          <p className="flex justify-between text-[5px] font-bold"><span className="text-[7px] text-[#2faf67]">+</span><span>0K/s</span></p>
          <p className="flex justify-between text-[#777]"><span>CPU</span><span className="text-[#2faf67]">56℃</span></p>
        </div>
        <Ico className="ml-[3px] size-[10px]">
          <circle cx="5.500" cy="6.500" r="5" fill="#2a87e0" stroke="none" />
          <path d="M5.500 4v5M3 6.500h5" stroke="#fff" strokeWidth={1.3} />
          <circle cx="10" cy="2.500" r="2" fill="#f2553a" stroke="none" />
        </Ico>
      </div>
    </section>
  );
}

export default function App() {
  return (
    <div className="relative flex h-screen min-h-[480px] flex-col overflow-hidden bg-[#434343] font-['Noto_Sans','Noto_Sans_CJK_SC',sans-serif]">
      <svg className="absolute size-0" aria-hidden="true">
        <defs>
          <linearGradient id="toolGradient">
            <stop offset="0" stopColor="#222" />
            <stop offset="1" stopColor="#fff" />
          </linearGradient>
        </defs>
      </svg>
      <MenuBar />
      <ControlBar />
      <main className="relative flex min-h-0 flex-1">
        <div className="flex min-w-0 flex-1 flex-col">
          <div className="flex h-4 shrink-0 pl-[39px]">
            <div className="flex w-[70px] items-center justify-between bg-[#525252] pr-[3px] pl-[2px] text-[#ddd]">
              <span className="text-[7px] leading-none whitespace-nowrap">50 % (RGB/预览)</span>
              <Btn label="关闭文档"><Ico className="size-[5px]" w={2.6}><path d="M1 1l10 10M11 1L1 11" /></Ico></Btn>
            </div>
          </div>
          <div className="flex min-h-0 flex-1">
            <div className="flex min-w-0 flex-1 flex-col">
              <HRuler />
              <div className="flex min-h-0 flex-1">
                <VRuler />
                <Canvas />
              </div>
              <StatusBar />
            </div>
            <div className="flex w-[11px] shrink-0 flex-col items-center bg-[#484848] py-[3px] text-[#aaa]">
              <Ico className="size-[5px]" w={2}><path d="M1 8l5-5 5 5" /></Ico>
              <span className="mt-[275px] h-4 w-2 rounded-full bg-[#666]" />
              <Ico className="mt-auto mb-[9px] size-[5px]" w={2}><path d="M1 4l5 5 5-5" /></Ico>
            </div>
          </div>
        </div>
        <Dock groups={DOCK} />
        <Dock groups={DOCK2} />
        <ToolsPanel />
        <FloatPanel items={LEFT_ITEMS} className="top-[11px] left-[43px]" head="h-[5px]" />
        <FloatPanel items={RIGHT_ITEMS} className="top-[23px] right-[50px]" head="h-[6px]" />
      </main>
      <Taskbar />
      <Monitor />
      <p className="pointer-events-none absolute inset-x-0 bottom-[21px] text-center font-['Noto_Sans_CJK_SC',sans-serif] text-[47px] leading-[48px] font-medium whitespace-nowrap text-[#ffff1c] [-webkit-text-stroke:7px_#000] [paint-order:stroke_fill] [stroke-linejoin:round]">
        可以用点选，也可用匡选
      </p>
    </div>
  );
}
